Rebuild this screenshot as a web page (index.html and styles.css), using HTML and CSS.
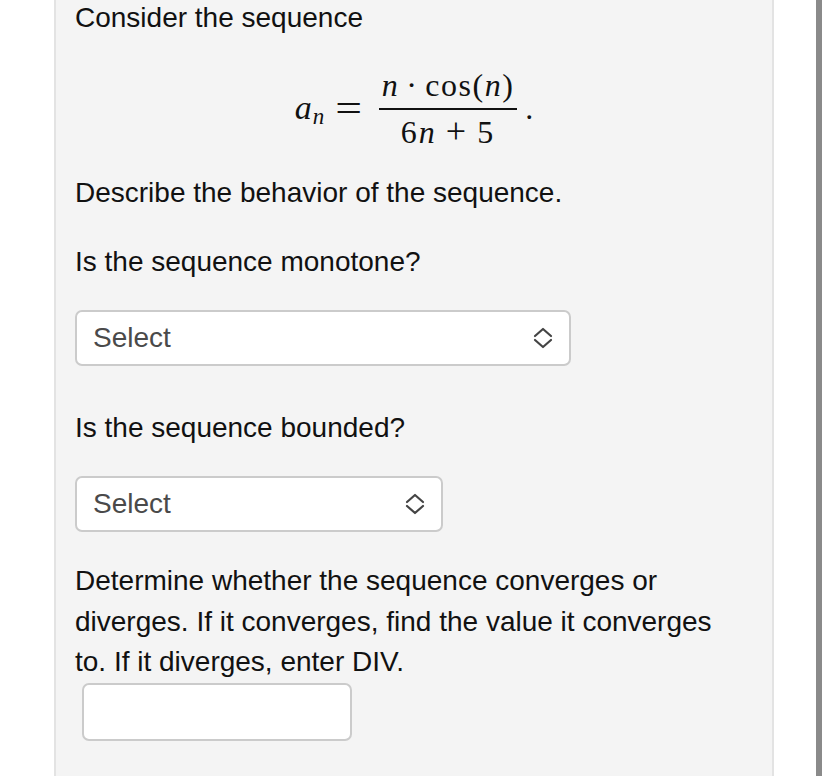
FILE: index.html
```html
<!DOCTYPE html>
<html lang="en">
<head>
  <meta charset="UTF-8">
  <meta name="viewport" content="width=device-width, initial-scale=1.0">
  <title>Sequence question</title>
  <link rel="stylesheet" href="styles.css">
</head>
<body>
  <div class="page">
    <div class="panel">
      <p class="text first">Consider the sequence</p>

      <div class="math">
        <span class="lhs"><i>a</i><sub><i>n</i></sub></span>
        <span class="eq">=</span>
        <span class="frac">
          <span class="num"><i>n</i><span class="op">·</span>cos(<i>n</i>)</span>
          <span class="bar"></span>
          <span class="den">6<i>n</i><span class="op plus">+</span>5</span>
        </span>
        <span class="dot">.</span>
      </div>

      <p class="text describe">Describe the behavior of the sequence.</p>

      <p class="text question">Is the sequence monotone?</p>
      <div class="select wide">
        <span>Select</span>
        <svg class="chevron" width="20" height="22" viewBox="0 0 20 22">
          <polyline points="2,9 10,2 18,9" />
          <polyline points="2,13 10,20 18,13" />
        </svg>
      </div>

      <p class="text question bounded">Is the sequence bounded?</p>
      <div class="select narrow">
        <span>Select</span>
        <svg class="chevron" width="20" height="22" viewBox="0 0 20 22">
          <polyline points="2,9 10,2 18,9" />
          <polyline points="2,13 10,20 18,13" />
        </svg>
      </div>

      <p class="text determine">Determine whether the sequence converges or diverges. If it converges, find the value it converges to. If it diverges, enter DIV.</p>
      <input class="answer" type="text">
    </div>
    <div class="scroll-track"></div>
  </div>
</body>
</html>
```

FILE: styles.css
```css
body {
  margin: 0;
  background: #ffffff;
  font-family: "Liberation Sans", Helvetica, Arial, sans-serif;
  color: #111;
}
.page {
  display: flex;
  min-height: 776px;
  overflow: hidden;
}
.panel {
  margin-left: 54px;
  width: 720px;
  box-sizing: border-box;
  border-left: 2px solid #e3e3e3;
  border-right: 2px solid #e3e3e3;
  background: #f4f4f4;
  padding: 0 19px;
}
.scroll-track {
  margin-left: 42px;
  width: 6px;
  background: #8a8a8a;
}
.text {
  font-size: 28px;
  line-height: 40.5px;
  margin: 0;
}
.text.first { margin-top: -2px; }
.text.describe { margin-top: 23.5px; }
.text.question { margin-top: 28.5px; }
.text.bounded { margin-top: 42px; }
.text.determine { margin-top: 29px; width: 660px; }

/* formula */
.math {
  display: flex;
  justify-content: center;
  align-items: center;
  height: 83px;
  margin-top: 28px;
  font-family: "Liberation Serif", "Times New Roman", serif;
  font-size: 32px;
  line-height: 36px;
  color: #111;
}
.math i { font-style: italic; }
.lhs {
  font-size: 34px;
}
.lhs sub {
  font-size: 23px;
  line-height: 0;
  vertical-align: -5px;
  margin-left: 1px;
}
.eq {
  margin: 0 17px 0 14px;
  font-size: 38px;
  transform: scaleX(1.25);
}
.frac {
  display: inline-flex;
  flex-direction: column;
  align-items: center;
  padding: 0 2px;
}
.num {
  height: 36px;
  padding: 0 3px 5px;
  letter-spacing: 1.5px;
}
.den {
  height: 36px;
  padding: 4px 3px 0;
  letter-spacing: 2px;
}
.bar {
  align-self: stretch;
  height: 2px;
  background: #111;
}
.op {
  margin: 0 7px;
}
.op.plus {
  margin: 0 9px;
  font-size: 36px;
  line-height: 0;
}
.dot {
  margin-left: 6px;
}

/* selects */
.select {
  display: flex;
  align-items: center;
  justify-content: space-between;
  box-sizing: border-box;
  height: 56px;
  margin-top: 27.5px;
  padding: 0 16px 0 16px;
  background: #fff;
  border: 2px solid #cbcbcb;
  border-radius: 7px;
  font-size: 28px;
  color: #4a4a4a;
}
.select.wide { width: 496px; }
.select.narrow { width: 368px; }
.chevron polyline {
  fill: none;
  stroke: #444;
  stroke-width: 2.2;
  stroke-linecap: round;
  stroke-linejoin: round;
}
.answer {
  display: block;
  box-sizing: border-box;
  width: 270px;
  height: 58px;
  margin: 0 0 0 7px;
  border: 2px solid #cbcbcb;
  border-radius: 7px;
  background: #fff;
  font-size: 28px;
}
```
